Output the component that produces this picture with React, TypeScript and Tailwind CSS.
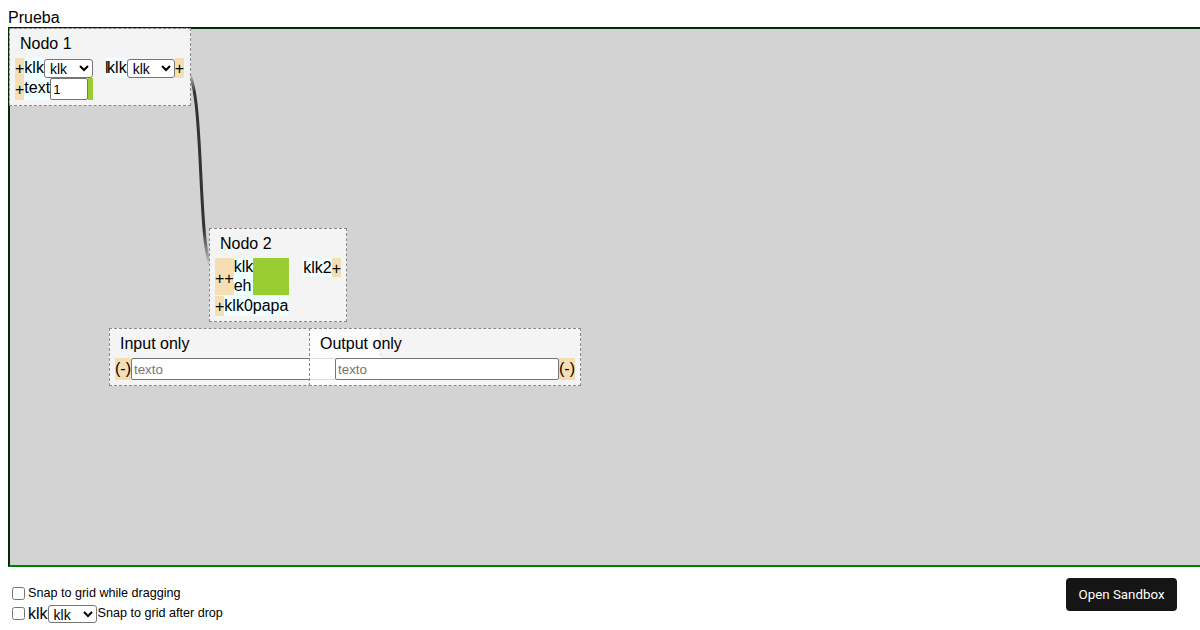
import React from "react";

const FONT = { fontFamily: "'Liberation Sans', Arial, sans-serif" };

const nodeCls =
  "absolute border border-dashed border-[#888] bg-[rgba(255,255,255,0.75)] p-[5px] text-[16px] text-black";

function Title({ children }: { children: React.ReactNode }) {
  return <div className="pl-[5px] pt-[1px] pb-[5px] leading-[18px] whitespace-nowrap">{children}</div>;
}

function Sel({ w = 49, h = 19 }: { w?: number; h?: number }) {
  return (
    <select
      className={`border border-[#767676] rounded-[3px] bg-white text-[14px] pl-[1px] text-black ${
        w === 49 ? "w-[49px]" : "w-[48px]"
      } ${h === 19 ? "h-[19px]" : "h-[18px]"}`}
      style={{ fontFamily: "'Liberation Sans', Arial, sans-serif" }}
      defaultValue="klk"
    >
      <option value="klk">klk</option>
    </select>
  );
}

function Curve() {
  return (
    <svg className="absolute left-0 top-0 pointer-events-none" width="600" height="400" viewBox="0 0 600 400">
      <defs>
        <linearGradient id="wire" gradientUnits="userSpaceOnUse" x1="0" y1="40" x2="0" y2="242">
          <stop offset="0" stopColor="#e6e6e6" />
          <stop offset="0.12" stopColor="#333" />
          <stop offset="0.8" stopColor="#333" />
          <stop offset="1" stopColor="#dcdcdc" />
        </linearGradient>
      </defs>
      <path d="M175,40 C198,44 186,242 206,242" fill="none" stroke="url(#wire)" strokeWidth="3" />
    </svg>
  );
}

export default function App() {
  return (
    <div className="w-[1200px] h-[630px] overflow-hidden bg-white pl-[8px] pt-[8px] text-black" style={FONT}>
      <div className="text-[16px] leading-[19px]">Prueba</div>
      <div className="relative w-[1200px] h-[540px] bg-[#d3d3d3] border-2 border-[green] [border-style:inset]">
        <div className="absolute left-[-1px] top-[-1px]">
          <Curve />

          {/* Nodo 1 */}
          <div className={`${nodeCls} left-0 top-0 w-[182px]`}>
            <Title>Nodo 1</Title>
            <div className="flex justify-between">
              <div className="flex flex-col">
                <div className="flex h-[20px] items-stretch">
                  <span className="bg-[wheat] leading-[22px]">+</span>
                  <span className="bg-[azure] leading-[20px]">klk</span>
                  <div className="flex items-center">
                    <Sel />
                  </div>
                </div>
                <div className="flex h-[22px] items-stretch">
                  <span className="bg-[wheat] leading-[24px]">+</span>
                  <span className="bg-[azure] leading-[20px]">text</span>
                  <input
                    className="w-[38px] h-[22px] border border-[#767676] rounded-[2px] bg-white px-[2px] text-[13.33px] text-black"
                    defaultValue="1"
                  />
                  <span className="w-[5px] bg-[yellowgreen]" />
                </div>
              </div>
              <div className="flex flex-col mr-[1px]">
                <div className="flex h-[20px] items-stretch">
                  <span className="bg-[azure] leading-[20px]">
                    <span className="mr-[-1.5px]">l</span>klk
                  </span>
                  <div className="flex items-center">
                    <Sel w={48} />
                  </div>
                  <span className="bg-[wheat] leading-[22px]">+</span>
                </div>
              </div>
            </div>
          </div>

          {/* Nodo 2 */}
          <div className={`${nodeCls} left-[200px] top-[200px] w-[138px]`}>
            <Title>Nodo 2</Title>
            <div className="flex justify-between">
              <div className="flex flex-col">
                <div className="flex h-[37px] items-stretch">
                  <span className="bg-[wheat] flex items-center leading-[18px] pt-[5px]">++</span>
                  <div className="flex flex-col bg-[azure] leading-[18.5px]">
                    <span>klk</span>
                    <span>eh</span>
                  </div>
                  <span className="w-[36px] bg-[yellowgreen]" />
                </div>
                <div className="flex h-[20px] mt-[1px] items-stretch">
                  <span className="bg-[wheat] leading-[22px]">+</span>
                  <span className="bg-[azure] leading-[20px]">klk0papa</span>
                </div>
              </div>
              <div className="flex flex-col">
                <div className="flex h-[19px] items-stretch">
                  <span className="bg-[azure] leading-[19px]">klk2</span>
                  <span className="bg-[wheat] leading-[21px]">+</span>
                </div>
              </div>
            </div>
          </div>

          {/* Input only */}
          <div className={`${nodeCls} left-[100px] top-[300px] w-[272px]`}>
            <Title>Input only</Title>
            <div className="flex h-[22px] items-stretch">
              <span className="bg-[wheat] leading-[22px] text-[16px]">(-)</span>
              <input
                className="flex-1 min-w-0 h-[22px] border border-[#767676] rounded-[2px] bg-white px-[2px] text-[13.33px] text-black placeholder:text-[#757575]"
                placeholder="texto"
              />
            </div>
          </div>

          {/* Output only */}
          <div className={`${nodeCls} left-[300px] top-[300px] w-[272px]`}>
            <Title>Output only</Title>
            <div className="flex h-[22px] items-stretch justify-end">
              <input
                className="w-[224px] h-[22px] border border-[#767676] rounded-[2px] bg-white px-[2px] text-[13.33px] text-black placeholder:text-[#757575]"
                placeholder="texto"
              />
              <span className="bg-[wheat] leading-[22px] text-[16px]">(-)</span>
            </div>
          </div>
        </div>
      </div>

      <div className="flex justify-between items-start mt-[11px]">
        <div className="flex flex-col pt-[6px]">
          <label className="flex items-center h-[18px] text-[12.6px]">
            <input type="checkbox" className="ml-[4px] mr-[3px] w-[13px] h-[13px]" />
            <span>Snap to grid while dragging</span>
          </label>
          <div className="flex items-center h-[21px] mt-[1px] text-[12.6px]">
            <input type="checkbox" className="ml-[4px] mr-[3px] w-[13px] h-[13px]" />
            <span className="text-[16px]">klk</span>
            <Sel h={18} />
            <span className="ml-[1px]">Snap to grid after drop</span>
          </div>
        </div>
        <button className="mr-[23px] w-[111px] h-[33px] rounded-[4px] bg-[#151515] text-white text-[13.33px]" style={{ fontFamily: "Roboto, 'Liberation Sans', sans-serif" }}>
          Open Sandbox
        </button>
      </div>
    </div>
  );
}
